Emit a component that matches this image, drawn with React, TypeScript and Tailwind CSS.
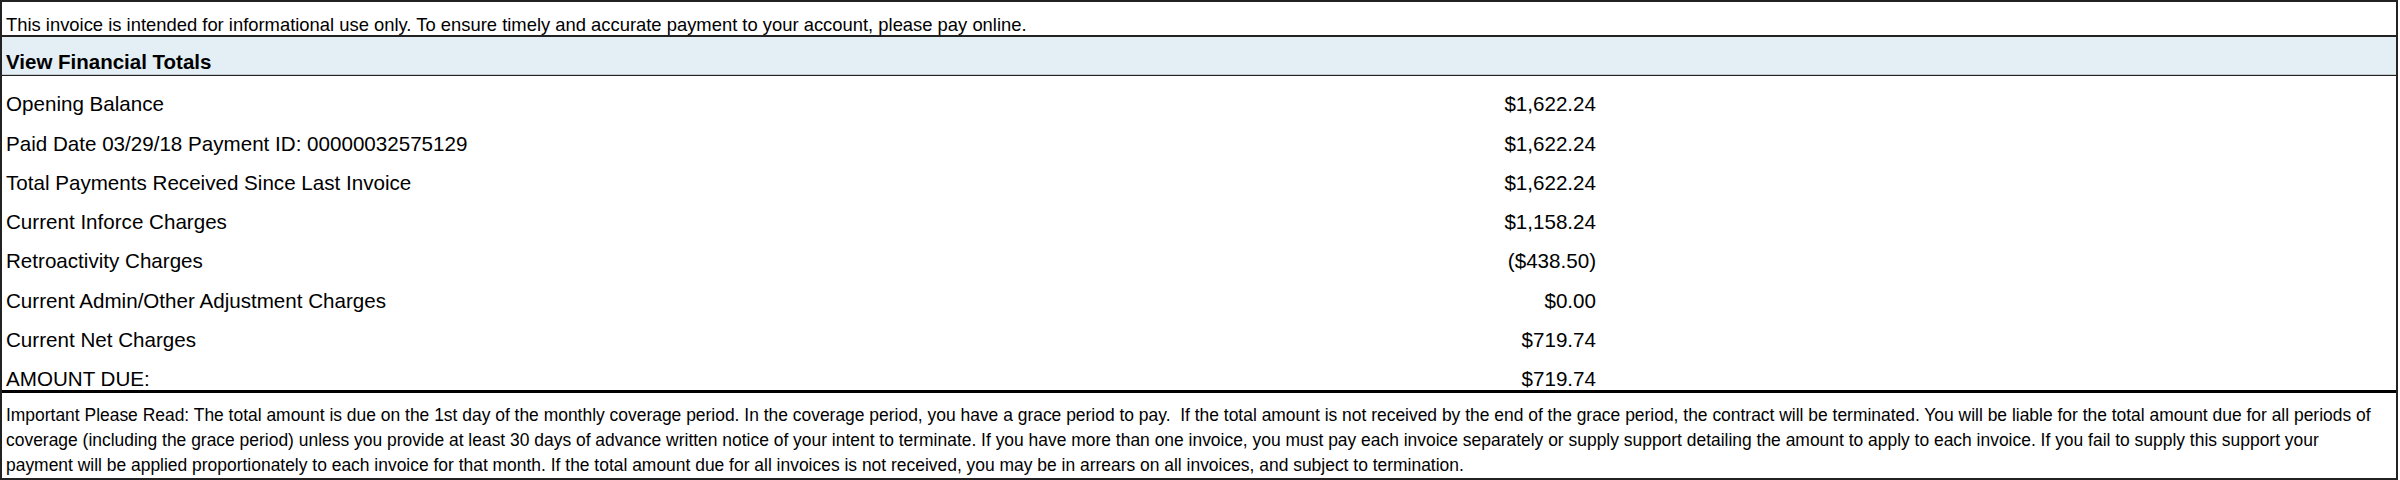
import React from "react";

const rows: [string, string][] = [
  ["Opening Balance", "$1,622.24"],
  ["Paid Date 03/29/18 Payment ID: 00000032575129", "$1,622.24"],
  ["Total Payments Received Since Last Invoice", "$1,622.24"],
  ["Current Inforce Charges", "$1,158.24"],
  ["Retroactivity Charges", "($438.50)"],
  ["Current Admin/Other Adjustment Charges", "$0.00"],
  ["Current Net Charges", "$719.74"],
  ["AMOUNT DUE:", "$719.74"],
];

const note = [
  "Important Please Read: The total amount is due on the 1st day of the monthly coverage period. In the coverage period, you have a grace period to pay.  If the total amount is not received by the end of the grace period, the contract will be terminated. You will be liable for the total amount due for all periods of",
  "coverage (including the grace period) unless you provide at least 30 days of advance written notice of your intent to terminate. If you have more than one invoice, you must pay each invoice separately or supply support detailing the amount to apply to each invoice. If you fail to supply this support your",
  "payment will be applied proportionately to each invoice for that month. If the total amount due for all invoices is not received, you may be in arrears on all invoices, and subject to termination.",
];

export default function App() {
  return (
    <div className="w-[2400px] h-[480px] bg-white">
      <div className="w-[2398px] h-[480px] border-2 border-[#222] bg-white text-black font-['Liberation_Sans',Arial,sans-serif] flex flex-col">
        <div className="h-[35px] shrink-0 border-b-2 border-[#222] flex items-end px-[4px] text-[18.4px] leading-[20px] whitespace-nowrap">
          This invoice is intended for informational use only. To ensure timely and accurate payment to your account, please pay online.
        </div>
        <div className="shrink-0 border-b border-[#222]">
          <div className="h-[38px] bg-[#e3eef5] border-b border-[#c3cad0] flex items-end px-[4px] pb-[1px] text-[20.5px] leading-[23px] font-bold">
            View Financial Totals
          </div>
        </div>
        <div className="shrink-0 border-b-[3px] border-black">
          {rows.map(([label, amount], i) => (
            <div
              key={i}
              className="grid grid-cols-[1300px_294px_1fr] items-end h-[39.3px] text-[20.6px] leading-[23px]"
            >
              <div className="px-[4px] whitespace-nowrap">{label}</div>
              <div className="text-right whitespace-nowrap">{amount}</div>
              <div />
            </div>
          ))}
        </div>
        <div className="flex-1 overflow-hidden pt-[10px] px-[4px] text-[17.45px] leading-[25px]">
          {note.map((line, i) => (
            <div key={i} className="whitespace-pre">
              {line}
            </div>
          ))}
        </div>
      </div>
    </div>
  );
}
